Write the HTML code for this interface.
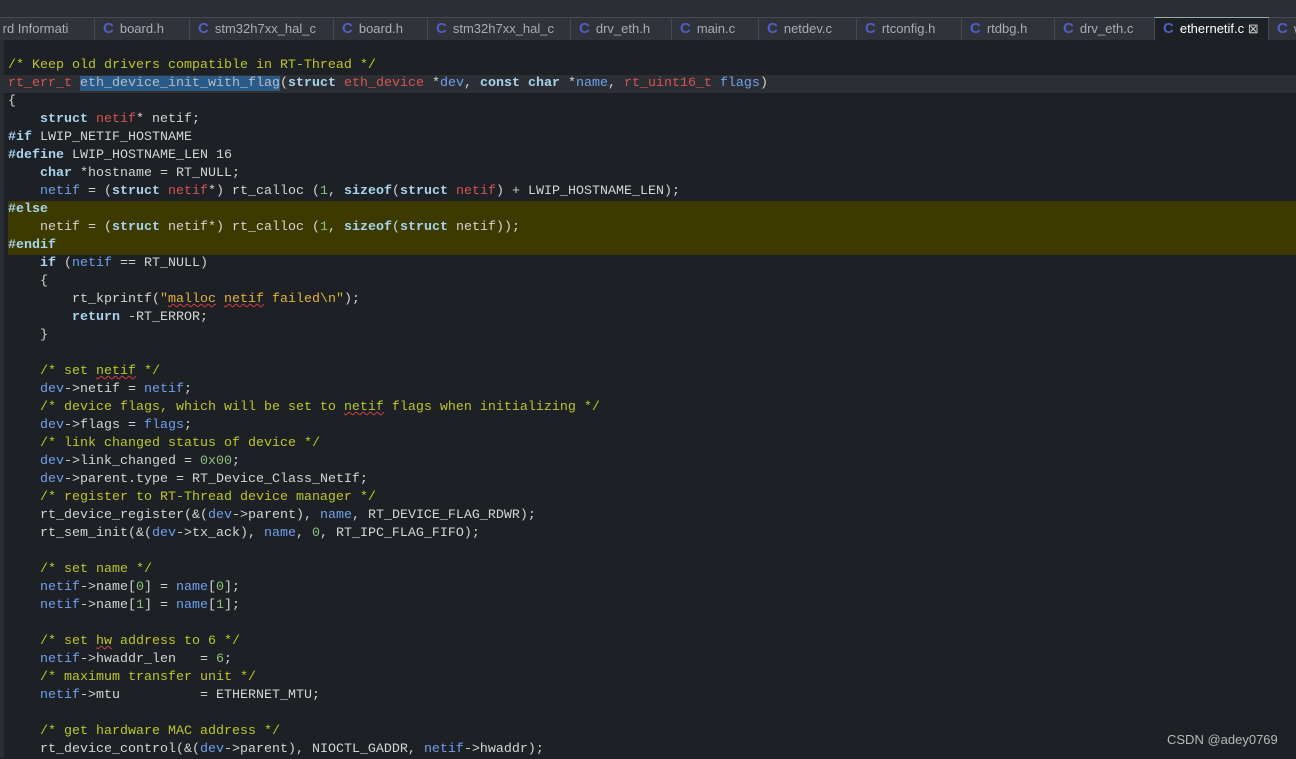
<!DOCTYPE html>
<html><head><meta charset="utf-8"><style>
body{margin:0;width:1296px;height:758px;background:#1d2024;overflow:hidden;position:relative;font-family:"Liberation Sans",sans-serif}
#top{position:absolute;left:0;top:0;width:1296px;height:17px;background:#2b2e33;border-bottom:1px solid #454a50}
#tabs{position:absolute;left:0;top:18px;width:1296px;height:22px;background:#30343a}
.tab{position:absolute;top:0;height:22px;border-left:1px solid #454a50;color:#a9adb3;font-size:13px;line-height:22px;white-space:nowrap;overflow:hidden}
.tab b{color:#4b5fc4;font-weight:bold;font-size:15px;margin:0 6px 0 8px}
.act{background:#1d2024;color:#fff;border-top:1px solid #9aa}
#gut{position:absolute;left:0;top:40px;width:4px;height:718px;background:#2a2d31}
.ln{position:absolute;left:8px;height:18px;line-height:18px;font-family:"Liberation Mono",monospace;font-size:13.33px;color:#d4d4d4;white-space:pre;width:1288px}
.c{color:#bcc923}.k{color:#a8d4ee;font-weight:bold}.t{color:#d75252}.v{color:#6fa0f0}.n{color:#8cc07a}.s{color:#e5b13a}
.sel{background:#2a5b88;color:#b4bcc6}
.u{text-decoration:underline wavy #d04040;text-decoration-thickness:1px}
</style></head><body>
<div id="top"></div>
<div id="tabs">
<div class="tab" style="left:-1px;width:95px;border:none">&nbsp;rd Informati</div>
<div class="tab" style="left:94px;width:95px"><b>C</b>board.h</div>
<div class="tab" style="left:189px;width:144px"><b>C</b>stm32h7xx_hal_c</div>
<div class="tab" style="left:333px;width:94px"><b>C</b>board.h</div>
<div class="tab" style="left:427px;width:143px"><b>C</b>stm32h7xx_hal_c</div>
<div class="tab" style="left:570px;width:101px"><b>C</b>drv_eth.h</div>
<div class="tab" style="left:671px;width:87px"><b>C</b>main.c</div>
<div class="tab" style="left:758px;width:98px"><b>C</b>netdev.c</div>
<div class="tab" style="left:856px;width:105px"><b>C</b>rtconfig.h</div>
<div class="tab" style="left:961px;width:93px"><b>C</b>rtdbg.h</div>
<div class="tab" style="left:1054px;width:100px"><b>C</b>drv_eth.c</div>
<div class="tab act" style="left:1154px;width:114px;top:-1px"><b>C</b>ethernetif.c <span style="color:#ccc">⊠</span></div>
<div class="tab" style="left:1268px;width:28px"><b>C</b>w</div>
</div>
<div id="gut"></div>
<div style="position:absolute;left:0;top:75px;width:1296px;height:18px;background:#2b2f34"></div>
<div style="position:absolute;left:8px;top:201px;width:1288px;height:54px;background:#3d3a00"></div>
<div class="ln" style="top:57px"><span class="c">/* Keep old drivers compatible in RT-Thread */</span></div>
<div class="ln" style="top:75px"><span class="t">rt_err_t</span> <span class="sel">eth_device_init_with_flag</span>(<span class="k">struct</span> <span class="t">eth_device</span> *<span class="v">dev</span>, <span class="k">const</span> <span class="k">char</span> *<span class="v">name</span>, <span class="t">rt_uint16_t</span> <span class="v">flags</span>)</div>
<div class="ln" style="top:93px">{</div>
<div class="ln" style="top:111px">    <span class="k">struct</span> <span class="t">netif</span>* netif;</div>
<div class="ln" style="top:129px"><span class="k">#if</span> LWIP_NETIF_HOSTNAME</div>
<div class="ln" style="top:147px"><span class="k">#define</span> LWIP_HOSTNAME_LEN 16</div>
<div class="ln" style="top:165px">    <span class="k">char</span> *hostname = RT_NULL;</div>
<div class="ln" style="top:183px">    <span class="v">netif</span> = (<span class="k">struct</span> <span class="t">netif</span>*) rt_calloc (<span class="n">1</span>, <span class="k">sizeof</span>(<span class="k">struct</span> <span class="t">netif</span>) + LWIP_HOSTNAME_LEN);</div>
<div class="ln" style="top:201px"><span class="k">#else</span></div>
<div class="ln" style="top:219px">    netif = (<span class="k">struct</span> netif*) rt_calloc (<span class="n">1</span>, <span class="k">sizeof</span>(<span class="k">struct</span> netif));</div>
<div class="ln" style="top:237px"><span class="k">#endif</span></div>
<div class="ln" style="top:255px">    <span class="k">if</span> (<span class="v">netif</span> == RT_NULL)</div>
<div class="ln" style="top:273px">    {</div>
<div class="ln" style="top:291px">        rt_kprintf(<span class="s">"<span class="u">malloc</span> <span class="u">netif</span> failed\n"</span>);</div>
<div class="ln" style="top:309px">        <span class="k">return</span> -RT_ERROR;</div>
<div class="ln" style="top:327px">    }</div>
<div class="ln" style="top:363px">    <span class="c">/* set <span class="u">netif</span> */</span></div>
<div class="ln" style="top:381px">    <span class="v">dev</span>-&gt;netif = <span class="v">netif</span>;</div>
<div class="ln" style="top:399px">    <span class="c">/* device flags, which will be set to <span class="u">netif</span> flags when initializing */</span></div>
<div class="ln" style="top:417px">    <span class="v">dev</span>-&gt;flags = <span class="v">flags</span>;</div>
<div class="ln" style="top:435px">    <span class="c">/* link changed status of device */</span></div>
<div class="ln" style="top:453px">    <span class="v">dev</span>-&gt;link_changed = <span class="n">0x00</span>;</div>
<div class="ln" style="top:471px">    <span class="v">dev</span>-&gt;parent.type = RT_Device_Class_NetIf;</div>
<div class="ln" style="top:489px">    <span class="c">/* register to RT-Thread device manager */</span></div>
<div class="ln" style="top:507px">    rt_device_register(&amp;(<span class="v">dev</span>-&gt;parent), <span class="v">name</span>, RT_DEVICE_FLAG_RDWR);</div>
<div class="ln" style="top:525px">    rt_sem_init(&amp;(<span class="v">dev</span>-&gt;tx_ack), <span class="v">name</span>, <span class="n">0</span>, RT_IPC_FLAG_FIFO);</div>
<div class="ln" style="top:561px">    <span class="c">/* set name */</span></div>
<div class="ln" style="top:579px">    <span class="v">netif</span>-&gt;name[<span class="n">0</span>] = <span class="v">name</span>[<span class="n">0</span>];</div>
<div class="ln" style="top:597px">    <span class="v">netif</span>-&gt;name[<span class="n">1</span>] = <span class="v">name</span>[<span class="n">1</span>];</div>
<div class="ln" style="top:633px">    <span class="c">/* set <span class="u">hw</span> address to 6 */</span></div>
<div class="ln" style="top:651px">    <span class="v">netif</span>-&gt;hwaddr_len   = <span class="n">6</span>;</div>
<div class="ln" style="top:669px">    <span class="c">/* maximum transfer unit */</span></div>
<div class="ln" style="top:687px">    <span class="v">netif</span>-&gt;mtu          = ETHERNET_MTU;</div>
<div class="ln" style="top:723px">    <span class="c">/* get hardware MAC address */</span></div>
<div class="ln" style="top:741px">    rt_device_control(&amp;(<span class="v">dev</span>-&gt;parent), NIOCTL_GADDR, <span class="v">netif</span>-&gt;hwaddr);</div>
<div style="position:absolute;left:1167px;top:732px;color:#b8b8b8;font-size:13px">CSDN @adey0769</div>
</body></html>
